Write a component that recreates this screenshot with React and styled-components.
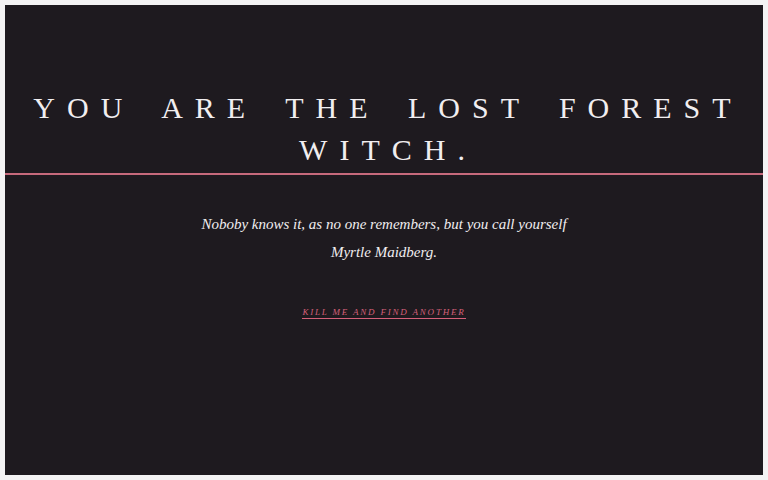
import React from 'react';
import styled, { createGlobalStyle } from 'styled-components';

const GlobalStyle = createGlobalStyle`
  html, body {
    margin: 0;
    padding: 0;
    background: #f4f3f4;
  }
  body {
    padding: 5px;
    font-family: "Liberation Serif", "DejaVu Serif", serif;
  }
`;

const Screen = styled.main`
  height: 470px;
  background: #1e1a1f;
  color: #f1eef0;
  display: flex;
  flex-direction: column;
  align-items: center;
`;

const Header = styled.header`
  align-self: stretch;
  padding: 82px 0 2px 8px;
  border-bottom: 2px solid #c76a7c;
  text-align: center;
`;

const Title = styled.h1`
  margin: 0;
  font-size: 30px;
  font-weight: 400;
  line-height: 42px;
  letter-spacing: 12px;
  word-spacing: 9px;
  text-transform: uppercase;
`;

const Intro = styled.p`
  margin: 35px 0 0;
  max-width: 400px;
  font-size: 15px;
  font-style: italic;
  line-height: 28px;
  text-align: center;
`;

const Again = styled.a`
  margin-top: 41px;
  padding-bottom: 1px;
  border-bottom: 1px solid #d4607a;
  color: #d4607a;
  font-size: 9px;
  font-style: italic;
  letter-spacing: 1.8px;
  text-transform: uppercase;
  text-decoration: none;
  cursor: pointer;
`;

export default function App() {
  return (
    <>
      <GlobalStyle />
      <Screen>
        <Header>
          <Title>You are the lost forest witch.</Title>
        </Header>
        <Intro>
          Noboby knows it, as no one remembers, but you call yourself Myrtle Maidberg.
        </Intro>
        <Again>Kill me and find another</Again>
      </Screen>
    </>
  );
}
